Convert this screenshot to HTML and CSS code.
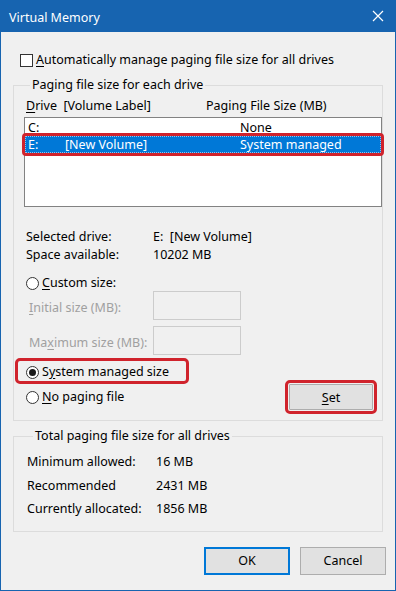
FILE: index.html
```html
<!DOCTYPE html>
<html>
<head>
<meta charset="utf-8">
<link rel="stylesheet" href="styles.css">
</head>
<body>
<div class="window">
  <div class="titlebar">
    <span class="title">Virtual Memory</span>
    <svg class="close" width="12" height="12" viewBox="0 0 12 12"><path d="M1 1L11 11M11 1L1 11" stroke="#fff" stroke-width="1.2" fill="none"/></svg>
  </div>
  <div class="client">
    <div class="auto"><span class="checkbox"></span><span><u>A</u>utomatically manage paging file size for all drives</span></div>

    <div class="group drives">
      <div class="group-title">Paging file size for each drive</div>
      <div class="list-header"><span class="h-drive"><u>D</u>rive&nbsp; [Volume Label]</span><span>Paging File Size (MB)</span></div>
      <div class="listbox">
        <div class="row"><span>C:</span><span></span><span>None</span></div>
        <div class="row selected"><span>E:</span><span>[New Volume]</span><span>System managed</span></div>
      </div>
      <div class="info">
        <span>Selected drive:</span><span>E:&nbsp; [New Volume]</span>
        <span>Space available:</span><span>10202 MB</span>
      </div>
      <div class="radio-row custom"><span class="radio"></span><span><u>C</u>ustom size:</span></div>
      <div class="field"><span class="field-label"><u>I</u>nitial size (MB):</span><span class="input"></span></div>
      <div class="field"><span class="field-label">Ma<u>x</u>imum size (MB):</span><span class="input"></span></div>
      <div class="radio-row system"><span class="radio checked"></span><span>S<u>y</u>stem managed size</span></div>
      <div class="last-row">
        <div class="radio-row"><span class="radio"></span><span><u>N</u>o paging file</span></div>
        <button class="btn set"><u>S</u>et</button>
      </div>
    </div>

    <div class="group totals">
      <div class="group-title">Total paging file size for all drives</div>
      <div class="totals-grid">
        <span>Minimum allowed:</span><span>16 MB</span>
        <span>Recommended</span><span>2431 MB</span>
        <span>Currently allocated:</span><span>1856 MB</span>
      </div>
    </div>

    <div class="buttons">
      <button class="btn ok">OK</button>
      <button class="btn cancel">Cancel</button>
    </div>
  </div>
</div>
</body>
</html>
```

FILE: styles.css
```css
* { box-sizing: border-box; }
html, body { margin: 0; padding: 0; }
body {
  background: #f0f0f0;
  font-family: "Noto Sans", "Open Sans", sans-serif;
  font-size: 12.5px;
  color: #000;
}
u { text-decoration: underline; text-underline-offset: 2px; }
.window {
  width: 396px;
  height: 591px;
  border: 1px solid #1764b0;
  border-top: none;
  background: #f0f0f0;
  overflow: hidden;
}
.titlebar {
  height: 32px;
  margin: 0 -1px;
  background: #1764b0;
  color: #fff;
  display: flex;
  align-items: center;
  justify-content: space-between;
  padding: 0 12px 0 9px;
}
.title { font-size: 12.5px; padding-top: 2px; }
.close { display: block; }
.client { padding: 19px 12px 0 12px; }
.auto {
  display: flex;
  align-items: center;
  height: 18px;
  padding-left: 7px;
  line-height: 18px;
}
.checkbox {
  width: 13px; height: 13px;
  border: 1px solid #333;
  background: #fff;
  margin-right: 3px;
  flex: none;
}
.group {
  border: 1px solid #dcdcdc;
}
.group-title {
  width: fit-content;
  line-height: 18px;
  height: 18px;
  margin-top: -10px;
  margin-left: 6px;
  padding: 0 2px;
  background: #f0f0f0;
}
.drives { margin-top: 16px; padding: 0 0 10px 10px; }
.list-header {
  margin-top: 3px;
  line-height: 18px;
  height: 18px;
  padding-left: 2px;
  display: flex;
}
.h-drive { width: 180px; }
.listbox {
  margin-top: 2px;
  height: 90px;
  background: #fff;
  border: 1px solid #828282;
  padding-top: 1px;
}
.row {
  display: grid;
  grid-template-columns: 37px 175px 1fr;
  height: 17px;
  line-height: 17px;
  padding-left: 3px;
}
.row.selected {
  background: #0078d7;
  color: #fff;
  border: 1px dotted #8fc3ee;
  line-height: 15px;
  padding-left: 2px;
  outline: 3px solid #d0232c;
  outline-offset: 0;
  border-radius: 1px;
}
.info {
  margin-top: 21px;
  display: grid;
  grid-template-columns: 127px 1fr;
  line-height: 18px;
  padding-left: 2px;
}
.radio-row {
  display: flex;
  align-items: center;
  height: 18px;
  line-height: 18px;
}
.custom { margin-top: 10px; padding-left: 2px; }
.radio {
  width: 13px; height: 13px;
  border: 1px solid #333;
  border-radius: 50%;
  background: #fff;
  margin-right: 3px;
  flex: none;
  display: flex;
  align-items: center;
  justify-content: center;
}
.radio.checked::after {
  content: "";
  width: 7px; height: 7px;
  border-radius: 50%;
  background: #1a1a1a;
}
.field {
  display: flex;
  align-items: center;
  color: #a0a0a0;
  padding-left: 5px;
  height: 29px;
}
.field + .field { margin-top: 6px; }
.custom + .field { margin-top: -1px; }
.field-label { width: 124px; padding-top: 4px; }
.input {
  width: 88px;
  height: 29px;
  border: 1px solid #cccccc;
  background: #f0f0f0;
}
.system {
  margin-top: 6px;
  margin-left: -6px;
  padding: 2px 0 0 8px;
  width: 168px;
  height: 20px;
  outline: 3px solid #d0232c;
  border-radius: 2px;
}
.last-row {
  display: flex;
  justify-content: space-between;
  align-items: center;
  margin-top: 3px;
  padding-left: 2px;
  padding-right: 9px;
  height: 26px;
}
.btn {
  font-family: inherit;
  font-size: 12.5px;
  color: #000;
  background: #e1e1e1;
  border: 1px solid #adadad;
  padding: 0;
  margin: 0;
}
.set {
  width: 84px;
  height: 26px;
  outline: 3px solid #d0232c;
  outline-offset: 1px;
  border-radius: 1px;
}
.totals { margin-top: 15px; padding: 0 0 10px 13px; }
.totals-grid {
  margin-top: 5px;
  display: grid;
  grid-template-columns: 129px 1fr;
  grid-auto-rows: 23.5px;
  line-height: 23.5px;
}
.buttons {
  display: flex;
  justify-content: flex-end;
  gap: 10px;
  margin-top: 15px;
  margin-right: -3px;
}
.ok, .cancel { width: 86px; height: 28px; }
.ok { border: 2px solid #0078d7; }
```
